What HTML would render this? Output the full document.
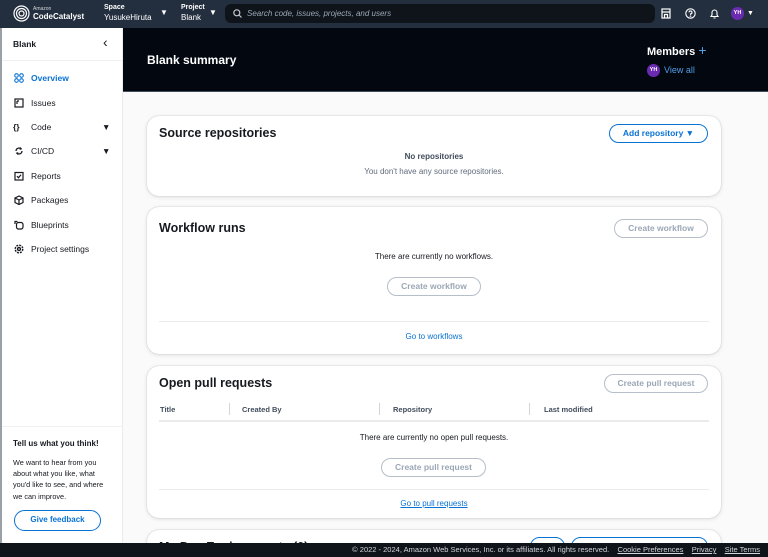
<!DOCTYPE html><html><head><style>
*{box-sizing:border-box;margin:0;padding:0}
html,body{width:768px;height:557px;overflow:hidden}
body{font-family:"Liberation Sans",sans-serif;background:#fafafa;position:relative;color:#16191f}
.top{position:absolute;left:0;top:0;width:768px;height:28px;background:#232f3e;color:#fff}
.abs{position:absolute}
.side{position:absolute;left:0;top:28px;width:123px;height:515px;background:#fff;border-left:2px solid #9aa0a6;border-right:1px solid #e9ebed}
.hero{position:absolute;left:123px;top:28px;width:645px;height:64px;background:#020710;border-bottom:1px solid #414d5c}
.card{position:absolute;left:147px;width:574px;background:#fff;border-radius:12px;box-shadow:0 0 1px #aaa,0 1px 4px rgba(0,7,22,.12)}
.card h2{position:absolute;left:12px;font-size:12.5px;font-weight:bold}
.btn{position:absolute;border:1.5px solid #b6bec9;border-radius:14px;color:#9ba7b6;font-size:8.5px;font-weight:bold;text-align:center;height:19px;line-height:16px;white-space:nowrap}
.nav div{position:absolute;left:12px;font-size:8.5px;color:#16191f;white-space:nowrap;width:100px;height:12px}
.nav span{position:absolute;left:17px;top:0}
.c{position:absolute;width:100%;text-align:center;font-size:8px}
.ln{position:absolute;left:12px;right:12px;height:1px;background:#e9ebed}
.lk{color:#0972d3}
</style></head><body>
<div class="top">
 <svg class="abs" style="left:13px;top:5px" width="17" height="17" viewBox="0 0 17 17" fill="none" stroke="#fff" stroke-width="1.2"><circle cx="8.5" cy="8.5" r="7.5"/><circle cx="8.5" cy="8.5" r="5"/><circle cx="8.5" cy="8.5" r="2.5"/></svg>
 <div class="abs" style="left:33px;top:6px;font-size:5px;color:#d1d5db">Amazon</div>
 <div class="abs" style="left:33px;top:12px;font-size:8px;font-weight:bold">CodeCatalyst</div>
 <div class="abs" style="left:104px;top:4px;font-size:7px;font-weight:bold">Space</div>
 <div class="abs" style="left:104px;top:13px;font-size:8px">YusukeHiruta</div>
 <div class="abs" style="left:160px;top:8px;font-size:8px">▼</div>
 <div class="abs" style="left:181px;top:4px;font-size:7px;font-weight:bold">Project</div>
 <div class="abs" style="left:181px;top:13px;font-size:8px">Blank</div>
 <div class="abs" style="left:209px;top:8px;font-size:8px">▼</div>
 <div class="abs" style="left:225px;top:4px;width:430px;height:19px;background:#0f141a;border-radius:6px"></div>
 <svg class="abs" style="left:233px;top:9px" width="9" height="9" viewBox="0 0 9 9" fill="none" stroke="#c6c6cd" stroke-width="1.2"><circle cx="3.8" cy="3.8" r="3"/><path d="M6 6l2.5 2.5"/></svg>
 <div class="abs" style="left:247px;top:9px;font-size:8px;font-style:italic;color:#9ba7b6">Search code, issues, projects, and users</div>
 <svg class="abs" style="left:661px;top:8px" width="10" height="11" viewBox="0 0 10 11" fill="none" stroke="#fff" stroke-width="1.2"><rect x="1" y="1" width="8" height="9"/><path d="M1 4h8M3.5 10V6.5h3V10"/></svg>
 <svg class="abs" style="left:685px;top:8px" width="11" height="11" viewBox="0 0 11 11" fill="none" stroke="#fff" stroke-width="1.1"><circle cx="5.5" cy="5.5" r="4.7"/><path d="M4 4.3a1.5 1.5 0 1 1 1.5 1.6v1"/><circle cx="5.5" cy="8.2" r=".3"/></svg>
 <svg class="abs" style="left:709px;top:8px" width="11" height="11" viewBox="0 0 11 11" fill="none" stroke="#fff" stroke-width="1.1"><path d="M2 8.5h7L8 7V4.5a2.5 2.5 0 0 0-5 0V7z M4.5 10h2"/></svg>
 <div class="abs" style="left:731px;top:7px;width:13px;height:13px;border-radius:50%;background:#6a2bb0;font-size:5.5px;font-weight:bold;text-align:center;line-height:13px">YH</div>
 <div class="abs" style="left:747px;top:10px;font-size:7px">▼</div>
</div>
<div class="side">
 <div class="abs" style="left:11px;top:11px;font-size:8.5px;font-weight:bold">Blank</div>
 <div class="abs" style="left:101px;top:6px;font-size:14px">‹</div>
 <div class="abs" style="left:0;top:32px;width:121px;height:1px;background:#eef0f2"></div>
 <div class="nav">
  <div style="top:45px;color:#0972d3;font-weight:bold">
   <svg class="abs" style="left:0;top:0" width="10" height="10" viewBox="0 0 10 10" fill="none" stroke="#0972d3" stroke-width="1.1"><circle cx="2.5" cy="2.5" r="1.8"/><circle cx="7.5" cy="2.5" r="1.8"/><circle cx="2.5" cy="7.5" r="1.8"/><circle cx="7.5" cy="7.5" r="1.8"/></svg><span>Overview</span></div>
  <div style="top:70px"><svg class="abs" width="10" height="10" viewBox="0 0 10 10" fill="none" stroke="#16191f" stroke-width="1.2"><rect x="1" y="1" width="8" height="8"/><path d="M3 3v3M3 3h2"/></svg><span>Issues</span></div>
  <div style="top:94px"><span style="left:-1px;font-weight:bold">{}</span><span>Code</span><span style="left:88px">▼</span></div>
  <div style="top:118px"><svg class="abs" width="10" height="10" viewBox="0 0 10 10" fill="none" stroke="#16191f" stroke-width="1.2"><path d="M2 5a3 3 0 0 1 5-2.2M8 5a3 3 0 0 1-5 2.2M6 1.5l1.2 1.3-1.5.5M4 8.5 2.8 7.2l1.5-.5"/></svg><span>CI/CD</span><span style="left:88px">▼</span></div>
  <div style="top:143px"><svg class="abs" width="10" height="10" viewBox="0 0 10 10" fill="none" stroke="#16191f" stroke-width="1.2"><rect x="1" y="1.5" width="8" height="7.5"/><path d="M3 5.2l1.5 1.5 2.5-3"/></svg><span>Reports</span></div>
  <div style="top:167px"><svg class="abs" width="10" height="10" viewBox="0 0 10 10" fill="none" stroke="#16191f" stroke-width="1.2"><path d="M5 1l4 2v4.5L5 9.5 1 7.5V3zM1 3l4 2 4-2M5 5v4.5"/></svg><span>Packages</span></div>
  <div style="top:192px"><svg class="abs" width="10" height="10" viewBox="0 0 10 10" fill="none" stroke="#16191f" stroke-width="1.2"><rect x="2.5" y="2.5" width="6.5" height="6.5" rx="2"/><path d="M1 4V1.5h2.5"/></svg><span>Blueprints</span></div>
  <div style="top:216px"><svg class="abs" width="10" height="10" viewBox="0 0 10 10" fill="none" stroke="#16191f" stroke-width="1.4"><circle cx="5" cy="5" r="3.8" stroke-dasharray="2 1"/><circle cx="5" cy="5" r="1.5"/></svg><span>Project settings</span></div>
 </div>
 <div class="abs" style="left:0;top:398px;width:121px;height:1px;background:#eef0f2"></div>
 <div class="abs" style="left:11px;top:411px;font-size:8px;font-weight:bold">Tell us what you think!</div>
 <div class="abs" style="left:11px;top:429px;font-size:7.3px;line-height:11.2px;width:95px;color:#16191f">We want to hear from you about what you like, what you'd like to see, and where we can improve.</div>
 <div class="abs" style="left:12px;top:482px;width:87px;height:21px;border:1.5px solid #0972d3;border-radius:11px;color:#0972d3;font-size:8px;font-weight:bold;text-align:center;line-height:18px">Give feedback</div>
</div>
<div class="hero">
 <div class="abs" style="left:24px;top:25px;font-size:12px;font-weight:bold;color:#fff">Blank summary</div>
 <div class="abs" style="left:524px;top:14px;font-size:11px;font-weight:bold;color:#fff">Members <span style="color:#539fe5;font-weight:normal;font-size:14px">+</span></div>
 <div class="abs" style="left:524px;top:36px;width:13px;height:13px;border-radius:50%;background:#6a2bb0;color:#fff;font-size:5.5px;font-weight:bold;text-align:center;line-height:13px">YH</div>
 <div class="abs" style="left:541px;top:37px;font-size:9px;color:#539fe5">View all</div>
</div>
<div class="card" style="top:116px;height:80px">
 <h2 style="top:10px">Source repositories</h2>
 <div class="btn" style="left:462px;top:8px;width:99px;border-color:#0972d3;color:#0972d3">Add repository ▼</div>
 <div class="c" style="top:36px;font-weight:bold;color:#414d5c">No repositories</div>
 <div class="c" style="top:51px;color:#5f6b7a">You don't have any source repositories.</div>
</div>
<div class="card" style="top:207px;height:147px">
 <h2 style="top:14px">Workflow runs</h2>
 <div class="btn" style="left:467px;top:12px;width:94px">Create workflow</div>
 <div class="c" style="top:45px">There are currently no workflows.</div>
 <div class="btn" style="left:240px;top:70px;width:94px">Create workflow</div>
 <div class="ln" style="top:114px"></div>
 <div class="c lk" style="top:125px">Go to workflows</div>
</div>
<div class="card" style="top:366px;height:152px">
 <h2 style="top:10px">Open pull requests</h2>
 <div class="btn" style="left:457px;top:8px;width:104px">Create pull request</div>
 <div class="abs" style="left:13px;top:39px;font-size:7.5px;font-weight:bold;color:#414d5c">Title</div>
 <div class="abs" style="left:82px;top:37px;width:1px;height:12px;background:#d1d5db"></div>
 <div class="abs" style="left:95px;top:39px;font-size:7.5px;font-weight:bold;color:#414d5c">Created By</div>
 <div class="abs" style="left:232px;top:37px;width:1px;height:12px;background:#d1d5db"></div>
 <div class="abs" style="left:246px;top:39px;font-size:7.5px;font-weight:bold;color:#414d5c">Repository</div>
 <div class="abs" style="left:382px;top:37px;width:1px;height:12px;background:#d1d5db"></div>
 <div class="abs" style="left:397px;top:39px;font-size:7.5px;font-weight:bold;color:#414d5c">Last modified</div>
 <div class="ln" style="top:54px;height:2px"></div>
 <div class="c" style="top:67px">There are currently no open pull requests.</div>
 <div class="btn" style="left:234px;top:92px;width:105px">Create pull request</div>
 <div class="ln" style="top:123px"></div>
 <div class="c lk" style="top:133px;text-decoration:underline">Go to pull requests</div>
</div>
<div class="card" style="top:530px;height:24px;overflow:hidden">
 <h2 style="top:10px">My Dev Environments (0)</h2>
 <div class="btn" style="left:383px;top:7px;width:35px;border-color:#0972d3"></div>
 <div class="btn" style="left:424px;top:7px;width:137px;border-color:#0972d3"></div>
</div>
<div class="abs" style="left:0;top:543px;width:768px;height:14px;background:#0f141a;font-size:7.5px;color:#d1d5db;line-height:14px;text-align:right;padding-right:8px;z-index:5;white-space:nowrap">© 2022 - 2024, Amazon Web Services, Inc. or its affiliates. All rights reserved. &nbsp;&nbsp; <u>Cookie Preferences</u> &nbsp;&nbsp; <u>Privacy</u> &nbsp;&nbsp; <u>Site Terms</u></div>
</body></html>
